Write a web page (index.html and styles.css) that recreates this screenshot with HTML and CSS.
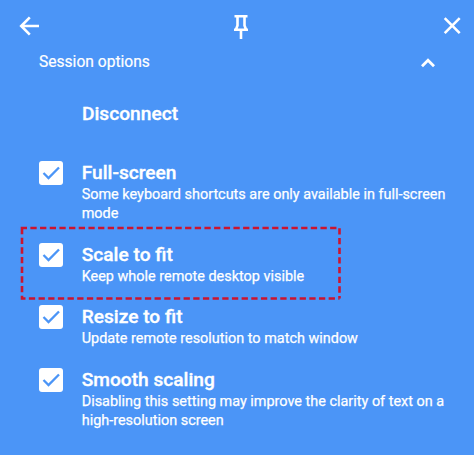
FILE: index.html
```html
<!DOCTYPE html>
<html lang="en">
<head>
<meta charset="utf-8">
<title>Session options</title>
<link rel="stylesheet" href="styles.css">
</head>
<body>
<main class="panel">
  <header class="toolbar">
    <svg class="icon" viewBox="0 0 24 24"><path d="M22 12H5M12.800 3.300L4.200 12l8.600 8.700"/></svg>
    <svg class="icon pin" viewBox="0 0 24 24"><path d="M5.500 2.300h13M5 15.700h14M12 16v9M8.500 2v9.500L7 15.500M15.500 2v9.500l1.500 4"/></svg>
    <svg class="icon" viewBox="0 0 24 24"><path d="M4.700 4.200l15 15M19.700 4.200l-15 15"/></svg>
  </header>
  <div class="section">
    <span>Session options</span>
    <svg class="chevron" viewBox="0 0 20 20"><path d="M4 14.300l6-6 6 6"/></svg>
  </div>
  <div class="title disconnect">Disconnect</div>
  <div class="options">
    <div class="option">
      <svg class="check" viewBox="0 0 24 24"><rect width="24" height="24" rx="3"/><path d="M4.500 12l5 5L20 6.500"/></svg>
      <div><div class="title">Full-screen</div><div class="desc">Some keyboard shortcuts are only available in full-screen<br>mode</div></div>
    </div>
    <div class="option">
      <svg class="highlight" viewBox="0 0 322 76"><path d="M.7 2H319.500V72.500M2 2V72.500H319.500"/></svg>
      <svg class="check" viewBox="0 0 24 24"><rect width="24" height="24" rx="3"/><path d="M4.500 12l5 5L20 6.500"/></svg>
      <div><div class="title">Scale to fit</div><div class="desc">Keep whole remote desktop visible</div></div>
    </div>
    <div class="option">
      <svg class="check" viewBox="0 0 24 24"><rect width="24" height="24" rx="3"/><path d="M4.500 12l5 5L20 6.500"/></svg>
      <div><div class="title">Resize to fit</div><div class="desc">Update remote resolution to match window</div></div>
    </div>
    <div class="option">
      <svg class="check" viewBox="0 0 24 24"><rect width="24" height="24" rx="3"/><path d="M4.500 12l5 5L20 6.500"/></svg>
      <div><div class="title">Smooth scaling</div><div class="desc">Disabling this setting may improve the clarity of text on a<br>high-resolution screen</div></div>
    </div>
  </div>
</main>
</body>
</html>
```

FILE: styles.css
```css
* { box-sizing: border-box; }
body { margin: 0; background: #4b95f7; color: #fff; font-family: Roboto, sans-serif; }
.panel { height: 455px; overflow: hidden; }
.toolbar { display: flex; justify-content: space-between; align-items: center; height: 51px; padding: 0 10px 0 17px; }
svg { display: block; flex: none; fill: none; stroke: #fff; overflow: visible; }
.icon { width: 24px; height: 24px; stroke-width: 2.6; }
.section { display: flex; justify-content: space-between; align-items: center; height: 22px; padding: 0 36px 0 39px; font-size: 15.600px; -webkit-text-stroke: 0.200px #fff; }
.section span { margin-top: -1px; }
.chevron { width: 20px; height: 20px; stroke-width: 2.8; }
.title { font-size: 19.150px; font-weight: 500; line-height: 23px; white-space: nowrap; -webkit-text-stroke: 0.350px #fff; }
.disconnect { margin: 29px 0 0 82px; }
.options { margin-top: 35.800px; }
.option { position: relative; display: flex; gap: 19px; padding: 0 0 20.200px 38.700px; }
.check { width: 24px; height: 24px; }
.check rect { fill: #fff; stroke: none; }
.check path { stroke: #4b95f7; stroke-width: 2.3; }
.desc { padding-top: 1px; margin-bottom: -1px; font-size: 14.430px; line-height: 19.300px; white-space: nowrap; -webkit-text-stroke: 0.250px #fff; }
.highlight { position: absolute; left: 19.500px; top: -16.500px; width: 322px; height: 76px; }
.highlight path { stroke: #cc142f; stroke-width: 2.600; stroke-dasharray: 6.300 3.370; }
```
